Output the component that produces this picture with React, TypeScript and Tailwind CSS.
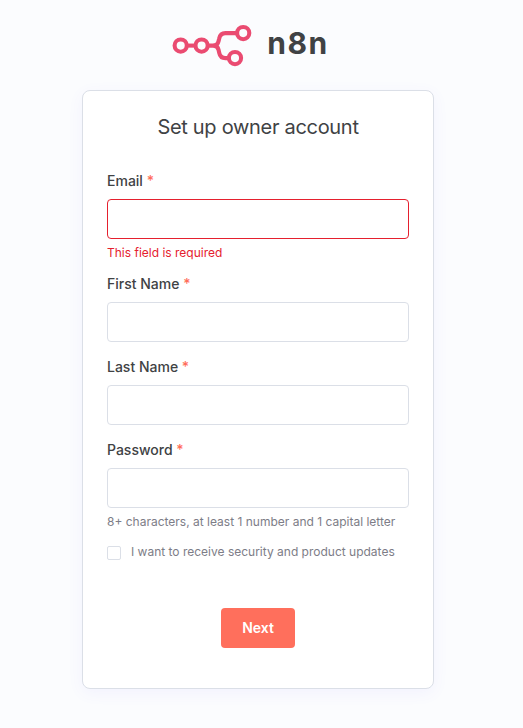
import { useState } from "react";

const fields = [
  { id: "email", label: "Email", type: "email", error: "This field is required" },
  { id: "firstName", label: "First Name", type: "text" },
  { id: "lastName", label: "Last Name", type: "text" },
  {
    id: "password",
    label: "Password",
    type: "password",
    hint: "8+ characters, at least 1 number and 1 capital letter",
  },
];

const Logo = () => (
  <div className="mr-[15px] flex h-[44px] items-start">
    <svg width="80" height="44" viewBox="0 0 80 44" fill="none" stroke="#ea4b71" strokeWidth="4.1">
      <circle cx="8.7" cy="21.6" r="6.1" />
      <circle cx="29.6" cy="21.6" r="6.1" />
      <circle cx="71.2" cy="9.1" r="6.1" />
      <circle cx="63" cy="34.1" r="6.1" />
      <path d="M14.7 21.6H23.6" />
      <path d="M35.6 21.6H41.5C44.5 21.6 46 19.8 46.6 17L47.2 14.5C47.9 11 50.2 9.1 53.4 9.1H65.2" />
      <path d="M41.5 21.6C44.5 21.6 46 23.4 46.6 26L47.2 28.7C47.9 32.2 50.2 34.1 53.4 34.1H57" />
    </svg>
    <span className="ml-[15px] text-[30px] leading-[38px] font-bold tracking-[1.6px] text-[#404244]">
      n8n
    </span>
  </div>
);

export default function App() {
  const [updates, setUpdates] = useState(false);

  return (
    <div className="flex min-h-screen flex-col items-center bg-[#fbfcfe] pt-6 pr-[7px] font-['Inter',sans-serif] text-[#404244]">
      <Logo />

      <form
        noValidate
        onSubmit={(e) => e.preventDefault()}
        className="mt-[22px] flex h-[599px] w-[352px] flex-col rounded-lg border border-[#dbdfe7] bg-white px-6 pt-6 shadow-[0_4px_16px_rgba(99,77,255,0.06)]"
      >
        <h1 className="text-center text-xl leading-[25px] font-normal tracking-[-0.3px]">
          Set up owner account
        </h1>

        <div className="mt-8 flex flex-col">
          {fields.map((field) => (
            <div key={field.id} className="mb-4">
              <label htmlFor={field.id} className="block text-sm leading-[18px] font-medium">
                {field.label} <span className="text-[#ff6d5a]">*</span>
              </label>
              <input
                id={field.id}
                type={field.type}
                className={`mt-[9px] block h-10 w-full rounded border bg-white px-4 text-sm outline-none ${
                  field.error ? "border-[#e5202e]" : "border-[#dbdfe7]"
                }`}
              />
              {field.error && (
                <p className="mt-[6px] -mb-[1px] text-xs leading-[15px] text-[#e5202e]">{field.error}</p>
              )}
              {field.hint && (
                <p className="mt-[6px] -mb-[1px] text-xs leading-[15px] text-[#7d7d87]">{field.hint}</p>
              )}
            </div>
          ))}
        </div>

        <label className="flex items-end text-xs leading-[15px] text-[#7d7d87]">
          <input
            type="checkbox"
            checked={updates}
            onChange={(e) => setUpdates(e.target.checked)}
            className="mr-[10px] -mb-[1px] h-[14px] w-[14px] appearance-none rounded-[2px] border border-[#dbdfe7] bg-white checked:bg-[#ff6d5a]"
          />
          I want to receive security and product updates
        </label>

        <button
          type="submit"
          className="mt-[49px] h-10 w-[74px] self-center rounded bg-[#ff6f5c] text-sm font-semibold text-white"
        >
          Next
        </button>
      </form>
    </div>
  );
}
